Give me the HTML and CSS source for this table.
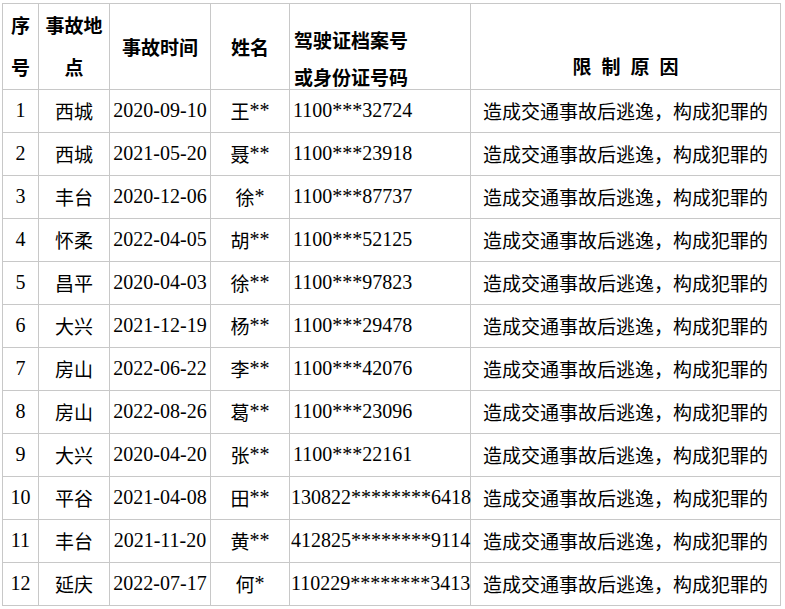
FILE: index.html
```html
<!DOCTYPE html>
<html lang="zh-CN">
<head>
<meta charset="utf-8">
<title>限制名单</title>
<link rel="stylesheet" href="styles.css">
</head>
<body>
<div class="sheet">
  <div class="cell hd hd-stack">序<br>号</div>
  <div class="cell hd hd-stack">事故地点</div>
  <div class="cell hd hd-mid">事故时间</div>
  <div class="cell hd hd-mid">姓名</div>
  <div class="cell hd hd-id">驾驶证档案号<br>或身份证号码</div>
  <div class="cell hd hd-reason"><span class="spaced">限制原因</span></div>

  <div class="cell">1</div><div class="cell zh">西城</div><div class="cell">2020-09-10</div><div class="cell"><span class="zh">王</span>**</div><div class="cell id">1100***32724</div><div class="cell zh">造成交通事故后逃逸，构成犯罪的</div>
  <div class="cell">2</div><div class="cell zh">西城</div><div class="cell">2021-05-20</div><div class="cell"><span class="zh">聂</span>**</div><div class="cell id">1100***23918</div><div class="cell zh">造成交通事故后逃逸，构成犯罪的</div>
  <div class="cell">3</div><div class="cell zh">丰台</div><div class="cell">2020-12-06</div><div class="cell"><span class="zh">徐</span>*</div><div class="cell id">1100***87737</div><div class="cell zh">造成交通事故后逃逸，构成犯罪的</div>
  <div class="cell">4</div><div class="cell zh">怀柔</div><div class="cell">2022-04-05</div><div class="cell"><span class="zh">胡</span>**</div><div class="cell id">1100***52125</div><div class="cell zh">造成交通事故后逃逸，构成犯罪的</div>
  <div class="cell">5</div><div class="cell zh">昌平</div><div class="cell">2020-04-03</div><div class="cell"><span class="zh">徐</span>**</div><div class="cell id">1100***97823</div><div class="cell zh">造成交通事故后逃逸，构成犯罪的</div>
  <div class="cell">6</div><div class="cell zh">大兴</div><div class="cell">2021-12-19</div><div class="cell"><span class="zh">杨</span>**</div><div class="cell id">1100***29478</div><div class="cell zh">造成交通事故后逃逸，构成犯罪的</div>
  <div class="cell">7</div><div class="cell zh">房山</div><div class="cell">2022-06-22</div><div class="cell"><span class="zh">李</span>**</div><div class="cell id">1100***42076</div><div class="cell zh">造成交通事故后逃逸，构成犯罪的</div>
  <div class="cell">8</div><div class="cell zh">房山</div><div class="cell">2022-08-26</div><div class="cell"><span class="zh">葛</span>**</div><div class="cell id">1100***23096</div><div class="cell zh">造成交通事故后逃逸，构成犯罪的</div>
  <div class="cell">9</div><div class="cell zh">大兴</div><div class="cell">2020-04-20</div><div class="cell"><span class="zh">张</span>**</div><div class="cell id">1100***22161</div><div class="cell zh">造成交通事故后逃逸，构成犯罪的</div>
  <div class="cell">10</div><div class="cell zh">平谷</div><div class="cell">2021-04-08</div><div class="cell"><span class="zh">田</span>**</div><div class="cell id long">130822********6418</div><div class="cell zh">造成交通事故后逃逸，构成犯罪的</div>
  <div class="cell">11</div><div class="cell zh">丰台</div><div class="cell">2021-11-20</div><div class="cell"><span class="zh">黄</span>**</div><div class="cell id long">412825********9114</div><div class="cell zh">造成交通事故后逃逸，构成犯罪的</div>
  <div class="cell">12</div><div class="cell zh">延庆</div><div class="cell">2022-07-17</div><div class="cell"><span class="zh">何</span>*</div><div class="cell id long">110229********3413</div><div class="cell zh">造成交通事故后逃逸，构成犯罪的</div>
</div>
</body>
</html>
```

FILE: styles.css
```css
html, body {
  margin: 0;
  padding: 0;
  background: #ffffff;
}

body {
  font-family: "Liberation Serif", "Noto Sans CJK SC", serif;
  font-size: 20px;
  color: #000000;
}

.sheet {
  display: grid;
  grid-template-columns: 36px 71px 101px 79px 181px 310px;
  grid-template-rows: 86px;
  grid-auto-rows: 43px;
  width: max-content;
  margin: 3px 0 0 2px;
  border-left: 1px solid #c8c8c8;
  border-top: 1px solid #c8c8c8;
}

.cell {
  box-sizing: border-box;
  border-right: 1px solid #c8c8c8;
  border-bottom: 1px solid #c8c8c8;
  display: flex;
  align-items: center;
  justify-content: center;
  white-space: nowrap;
  line-height: 1;
  padding-bottom: 2px;
}

.zh {
  font-family: "Noto Sans CJK SC", sans-serif;
  font-size: 19px;
}

.cell.id {
  justify-content: flex-start;
  padding-left: 3px;
}

.cell.id.long {
  padding-left: 1px;
}

.hd {
  font-family: "Noto Sans CJK SC", sans-serif;
  font-weight: 700;
  font-size: 19px;
  padding-bottom: 0;
}

.hd-stack {
  display: block;
  text-align: center;
  line-height: 42px;
  white-space: normal;
}

.hd-mid {
  align-items: center;
}

.hd-id {
  display: block;
  text-align: left;
  padding: 17px 0 0 4px;
  line-height: 37px;
}

.hd-reason {
  align-items: flex-end;
  padding-bottom: 14px;
}

.spaced {
  letter-spacing: 10px;
  margin-right: -10px;
}
```
